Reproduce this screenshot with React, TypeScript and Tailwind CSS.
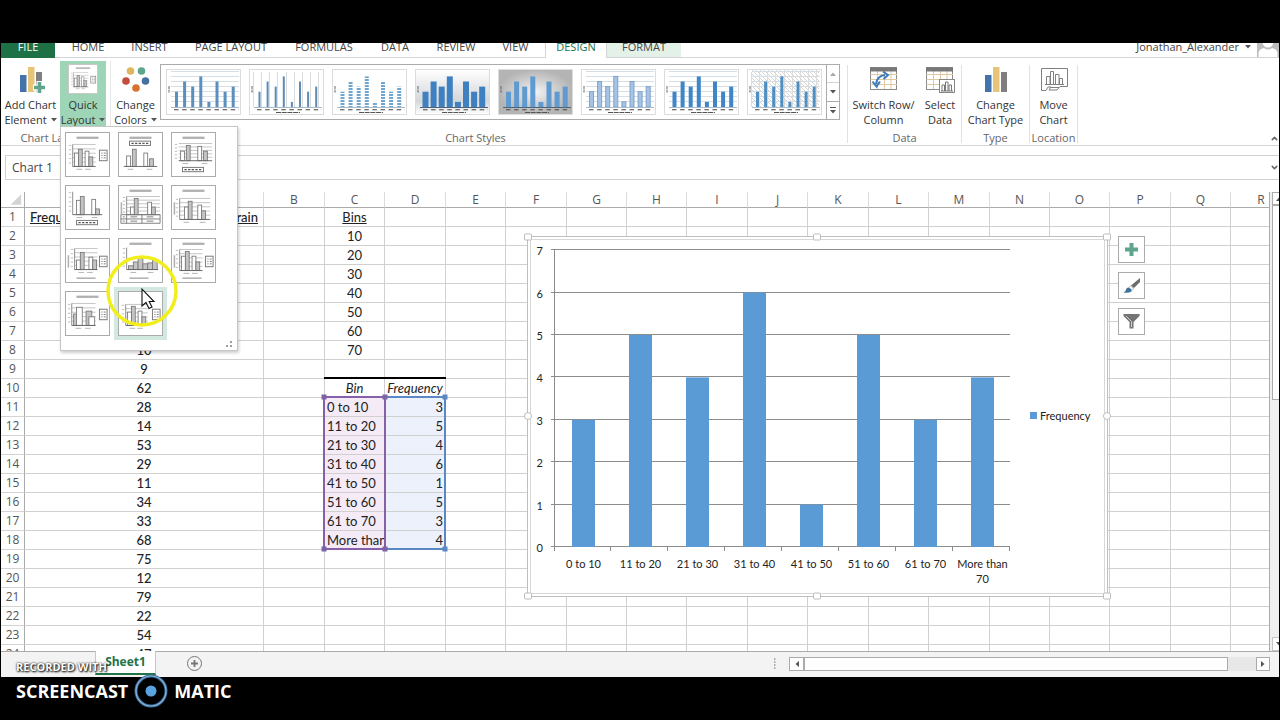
import React from 'react';
import { ChevronDown, ChevronUp } from 'lucide-react';

type Bar = [x: number, y: number, filled: boolean];

interface LayoutSpec {
  name: string;
  title?: boolean;
  plot: [left: number, top: number, right: number, bottom: number];
  grid?: boolean;
  axis?: boolean;
  legend?: 'right' | 'top' | 'bottom' | 'table';
  xTitle?: boolean;
  yTitle?: boolean;
  barWidth?: number;
  bars: Bar[];
}

const UI_FONT = "font-['Open_Sans','Noto_Sans',sans-serif]";
const CELL_FONT = "font-['Lato','Noto_Sans',sans-serif]";

const FREQUENCIES = [3, 5, 4, 6, 1, 5, 3, 4];
const BINS = ['0 to 10', '11 to 20', '21 to 30', '31 to 40', '41 to 50', '51 to 60', '61 to 70', 'More than 70'];

const COLUMNS = [
  { name: 'A', width: 239 },
  { name: 'B', width: 61 },
  { name: 'C', width: 60 },
  { name: 'D', width: 61 },
  { name: 'E', width: 60 },
  { name: 'F', width: 61 },
  { name: 'G', width: 60 },
  { name: 'H', width: 60 },
  { name: 'I', width: 61 },
  { name: 'J', width: 60 },
  { name: 'K', width: 61 },
  { name: 'L', width: 60 },
  { name: 'M', width: 61 },
  { name: 'N', width: 60 },
  { name: 'O', width: 60 },
  { name: 'P', width: 61 },
  { name: 'Q', width: 60 },
  { name: 'R', width: 61 },
];
const TABLE_WIDTH = COLUMNS.reduce((sum, c) => sum + c.width, 24);

// column A, starting at row 8
const SAMPLES = [10, 9, 62, 28, 14, 53, 29, 11, 34, 33, 68, 75, 12, 79, 22, 54, 47];

const LAYOUTS: LayoutSpec[] = [
  { name: 'Layout 1', title: true, plot: [7, 12, 31, 35], grid: true, axis: true, legend: 'right', bars: [[9, 21, false], [13, 17, true], [20, 19, false], [24, 25, true]] },
  { name: 'Layout 2', title: true, plot: [5, 16, 40, 35], legend: 'top', bars: [[8, 24, false], [14, 17, true], [26, 21, false], [32, 27, true]] },
  { name: 'Layout 3', title: true, plot: [7, 11, 42, 29], grid: true, legend: 'bottom', bars: [[9, 19, false], [15, 13, true], [27, 14, false], [33, 19, true]] },
  { name: 'Layout 4', plot: [7, 6, 38, 30], axis: true, legend: 'bottom', bars: [[11, 15, false], [15, 11, true], [27, 14, false], [31, 24, true]] },
  { name: 'Layout 5', title: true, plot: [8, 11, 43, 30], grid: true, axis: true, yTitle: true, legend: 'table', bars: [[12, 22, false], [16, 13, true], [30, 17, false], [34, 22, true]] },
  { name: 'Layout 6', title: true, plot: [8, 13, 40, 35], grid: true, axis: true, yTitle: true, bars: [[13, 22, false], [17, 16, true], [27, 20, false], [31, 26, true]] },
  { name: 'Layout 7', plot: [9, 10, 33, 32], grid: true, axis: true, yTitle: true, xTitle: true, legend: 'right', bars: [[11, 22, false], [15, 14, true], [24, 19, false], [28, 22, true]] },
  { name: 'Layout 8', title: true, plot: [8, 9, 41, 32], axis: true, xTitle: true, barWidth: 5, bars: [[10, 28, true], [15, 24, true], [20, 20, true], [25, 26, true], [30, 25, true], [35, 22, true]] },
  { name: 'Layout 9', title: true, plot: [8, 11, 32, 33], grid: true, axis: true, yTitle: true, xTitle: true, legend: 'right', bars: [[10, 18, false], [14, 13, true], [21, 18, false], [25, 24, true]] },
  { name: 'Layout 10', title: true, plot: [6, 12, 31, 35], grid: true, axis: true, legend: 'right', barWidth: 6, bars: [[8, 23, true], [11, 16, false], [21, 20, true], [24, 26, false]] },
  { name: 'Layout 11', plot: [7, 13, 30, 35], grid: true, axis: true, legend: 'right', bars: [[9, 21, false], [13, 15, true], [20, 20, false], [24, 26, true]] },
];

const LayoutThumb = ({ spec, className }: { spec: LayoutSpec; className: string }) => {
  const [left, top, right, bottom] = spec.plot;
  const step = (bottom - top) / 5;
  return (
    <svg viewBox="0 0 45 45" className={className} fill="none" stroke="#8a8a8a" strokeWidth="1">
      {spec.title && <path d="M11 5H34" stroke="#b0b0b0" strokeWidth="2.4" />}
      {spec.grid && [0, 1, 2, 3, 4].map((i) => (
        <path key={i} d={`M${left} ${top + step * i}H${right}`} stroke="#b4b4b4" strokeWidth="0.8" />
      ))}
      {spec.axis && <path d={`M${left} ${top}V${bottom}`} />}
      {[0, 1, 2, 3, 4].map((i) => (
        (spec.axis || spec.grid) && <path key={i} d={`M${left - 4} ${top + 1 + step * i}h2.4`} stroke="#aaa" strokeWidth="0.8" />
      ))}
      {spec.bars.map(([x, y, filled]) => (
        <rect key={x} x={x} y={y} width={spec.barWidth || 4} height={bottom - y} fill={filled ? '#c4c4c4' : '#fff'} stroke="#777" strokeWidth="0.9" />
      ))}
      <path d={`M${left} ${bottom}H${right}`} stroke="#666" />
      {spec.legend !== 'table' && <path d={`M${left + 4} ${bottom + 3}h6M${right - 11} ${bottom + 3}h6`} stroke="#aaa" strokeWidth="0.9" />}
      {spec.legend === 'right' && (
        <>
          <rect x="35" y="18" width="8" height="11" fill="#fff" stroke="#777" />
          <path d="M37 21h1.2M37 23.5h1.2M37 26h1.2M39.5 21h2M39.5 23.5h2M39.5 26h2" stroke="#777" />
        </>
      )}
      {(spec.legend === 'top' || spec.legend === 'bottom') && (
        <g transform={spec.legend === 'top' ? 'translate(0 8.5)' : 'translate(0 36)'}>
          <rect x="11" y="0" width="22" height="4.5" fill="#fff" stroke="#777" />
          <path d="M13 2.3h18" stroke="#555" strokeWidth="1.2" strokeDasharray="2.4 1.4" />
        </g>
      )}
      {spec.legend === 'table' && (
        <path d="M2 30H43V39H2ZM2 34.5H43M8 30V39M24 30V39M12 32.3h7M29 32.3h7M12 36.8h7M29 36.8h7M4 32.3h2M4 36.8h2" stroke="#7d7d7d" />
      )}
      {spec.xTitle && <path d="M11 41H31" stroke="#b0b0b0" strokeWidth="1.6" />}
      {spec.yTitle && <path d="M2.5 17V30" stroke="#b0b0b0" strokeWidth="1.6" />}
    </svg>
  );
};

interface StyleSpec {
  name: string;
  barWidth: number;
  fill: string;
  grid?: 'rows' | 'columns' | 'hatch';
  background?: string;
  axisTitle?: boolean;
  dashed?: boolean;
  outline?: string;
}

const STYLES: StyleSpec[] = [
  { name: 'Style 1', barWidth: 3, fill: '#5b8fc0', grid: 'rows' },
  { name: 'Style 2', barWidth: 2, fill: '#5d8bb4', grid: 'columns', axisTitle: true },
  { name: 'Style 3', barWidth: 4, fill: '#6fa6d0', axisTitle: true, dashed: true },
  { name: 'Style 4', barWidth: 6, fill: '#3f80c0', background: 'url(#fadeLight)', axisTitle: true },
  { name: 'Style 5', barWidth: 5, fill: '#5f9ad0', background: 'url(#fadeDark)', axisTitle: true },
  { name: 'Style 6', barWidth: 4, fill: '#a5c3e4', grid: 'rows', axisTitle: true, outline: '#7fa3cb' },
  { name: 'Style 7', barWidth: 4, fill: '#3f86c6', grid: 'rows', axisTitle: true },
  { name: 'Style 8', barWidth: 3, fill: '#4f8fc4', grid: 'hatch', axisTitle: true },
];

const StyleThumb = ({ spec }: { spec: StyleSpec }) => (
  <svg viewBox="0 0 75 46" className="h-[46px] w-[75px]">
    <defs>
      <linearGradient id="fadeLight" x1="0" y1="0" x2="0" y2="1">
        <stop offset="0" stopColor="#ffffff" />
        <stop offset="0.7" stopColor="#d4d6d9" />
        <stop offset="1" stopColor="#ffffff" />
      </linearGradient>
      <radialGradient id="fadeDark">
        <stop offset="0" stopColor="#f2f2f2" />
        <stop offset="1" stopColor="#b4b4b4" />
      </radialGradient>
      <pattern id="hatch" width="4" height="4" patternUnits="userSpaceOnUse">
        <path d="M0 0L4 4" stroke="#b9b9b9" strokeWidth="0.6" />
      </pattern>
    </defs>
    <rect x="0.5" y="0.5" width="74" height="45" fill={spec.background || '#fff'} stroke="#dcdcdc" />
    {spec.grid === 'hatch' && <rect x="5" y="1" width="67" height="37" fill="url(#hatch)" />}
    {(spec.grid === 'rows' || spec.grid === 'hatch') && [2, 7, 12, 17, 22, 27, 32].map((y) => (
      <path key={y} d={`M5 ${y + 0.5}H73`} stroke="#d6dee5" />
    ))}
    {(spec.grid === 'columns' || spec.grid === 'hatch') && [4, 12, 20, 28, 37, 45, 53, 61, 69].map((x) => (
      <path key={x} d={`M${x + 0.5} 3V38`} stroke="#dcdcdc" />
    ))}
    {FREQUENCIES.map((value, i) => (
      <rect
        key={i}
        x={10.5 + i * 8.1 - spec.barWidth / 2}
        y={38 - value * 5.1}
        width={spec.barWidth}
        height={value * 5.1}
        fill={spec.fill}
        stroke={spec.outline}
      />
    ))}
    {spec.dashed && [9, 12, 15, 18, 21, 24, 27, 30, 33, 36].map((y) => (
      <path key={y} d={`M7 ${y + 0.5}H72`} stroke="#fff" />
    ))}
    <path d="M5 38.5H73" stroke={spec.background ? '#4d6378' : '#a9bacb'} />
    <path d="M8 40.7H73" stroke="#444" strokeWidth="1.1" strokeDasharray="4.5 3.6" />
    {spec.axisTitle && <path d="M27 43.5H51" stroke="#555" strokeWidth="1" strokeDasharray="5 0.7" />}
    {(spec.axisTitle || spec.name === 'Style 1') && <path d="M3 17V24" stroke="#666" strokeWidth="1" strokeDasharray="3 0.6" />}
  </svg>
);

const Caret = () => (
  <svg viewBox="0 0 6 4" className="h-1 w-1.5 shrink-0">
    <path d="M0 0H6L3 3.5Z" fill="#555" />
  </svg>
);

const RibbonButton = ({ lines, caret, active, width, children }: {
  lines: [string, string];
  caret?: boolean;
  active?: boolean;
  width: string;
  children: React.ReactNode;
}) => (
  <button className={`flex h-[68px] ${width} flex-col items-center whitespace-nowrap text-[11px] leading-[15px] text-[#333] ${active ? 'bg-[#9fd5b7]' : ''}`}>
    <span className="flex h-[36px] items-center">{children}</span>
    <span>{lines[0]}</span>
    <span className="flex items-center gap-1">
      {lines[1]}
      {caret && <Caret />}
    </span>
  </button>
);

const RibbonGroup = ({ label, children }: { label: string; children: React.ReactNode }) => (
  <section aria-label={label} className="flex flex-col items-center">
    <div className="flex h-[68px]">{children}</div>
    <span className="text-[11px] leading-[18px] text-[#666]">{label}</span>
  </section>
);

const Divider = () => <div className="mt-1 h-[78px] w-px shrink-0 bg-[#e1e1e1]" />;

const TABS = [
  { name: 'HOME', width: 'w-[66px]' },
  { name: 'INSERT', width: 'w-[57px]' },
  { name: 'PAGE LAYOUT', width: 'w-[106px]' },
  { name: 'FORMULAS', width: 'w-[80px]' },
  { name: 'DATA', width: 'w-[62px]' },
  { name: 'REVIEW', width: 'w-[60px]' },
  { name: 'VIEW', width: 'w-[59px]' },
];

const TabBar = () => (
  <nav className="-mt-[7px] flex h-[22px] shrink-0 items-stretch text-[11px] leading-[22px] text-[#444]">
    <button className="w-[54px] bg-[#1e7145] text-white">FILE</button>
    {TABS.map((tab) => (
      <button key={tab.name} className={`${tab.width} whitespace-nowrap border-b border-[#d4d4d4]`}>{tab.name}</button>
    ))}
    <button className="w-[62px] border-x border-[#d4d4d4] text-[#217346]">DESIGN</button>
    <button className="w-[74px] border-b border-[#d4d4d4] bg-[#e4f1e8]">FORMAT</button>
    <div className="flex flex-1 items-center justify-end gap-1.5 border-b border-[#d4d4d4]">
      <button className="flex items-center gap-1.5">Jonathan_Alexander <Caret /></button>
      <svg viewBox="0 0 22 21" className="h-[21px] w-[22px] bg-[#bdbdbd]">
        <circle cx="11" cy="6" r="5.5" fill="#fff" />
        <path d="M1.500 21V17Q2 13 7 12Q11 15 15 12Q20 13 20.500 17V21Z" fill="#fff" />
      </svg>
    </div>
  </nav>
);

const BarsIcon = ({ plus }: { plus?: boolean }) => (
  <svg viewBox="0 0 28 28" className="h-7 w-7">
    <rect x="3" y="10" width="6.500" height="17" fill="#4472ab" />
    <rect x="11" y="2" width="6.500" height="25" fill="#e6c57a" />
    <rect x="19" y="7" width="6" height="20" fill="#7f7f7f" />
    {plus && (
      <>
        <path d="M22.500 16V29M16 22.500H29" stroke="#fff" strokeWidth="6" />
        <path d="M22.500 17V28M17 22.500H28" stroke="#5fa58c" strokeWidth="3.600" />
      </>
    )}
  </svg>
);

const SheetIcon = ({ kind }: { kind: 'switch' | 'select' }) => (
  <svg viewBox="0 0 30 28" className="h-7 w-[30px]" fill="none">
    <rect x="1.500" y="2.500" width="26" height="22" fill="#fff" stroke="#8a8a8a" />
    <path d="M1.500 9.500H28M1.500 14.500H28M1.500 19.500H28M8.500 6V24M15.500 6V24M22 6V24" stroke="#e0c9a2" />
    <path d="M1 4.500H28" stroke="#777" strokeWidth="4" />
    {kind === 'switch' ? (
      <>
        <path d="M7 19Q8 11 16 10" stroke="#3f7ab8" strokeWidth="2" />
        <path d="M14 6.500L19 10L14.500 14M3.500 16.500L7.500 21.500L11 16.500" stroke="#3f7ab8" strokeWidth="2" />
      </>
    ) : (
      <>
        <rect x="14.500" y="14.500" width="15" height="13" fill="#fff" stroke="#888" />
        <path d="M17 26V20h2.500v6M20.500 26V17H23v9M24 26V20h2.500v6M16 26H28" stroke="#777" />
      </>
    )}
  </svg>
);

const MoveChartIcon = () => (
  <svg viewBox="0 0 28 28" className="h-7 w-7" fill="none" stroke="#808080">
    <path d="M1.500 3.500H27.500V21.500H20L17 25H9L11 22H8L6 25.500H1.500Z" fill="#fff" />
    <path d="M6.500 19.500V11.500h3.500v8M10.500 19.500V6.500H13.500v13M15.500 19.500V9.500h3.500v10M19.500 19.500V13.500h3v6M5 19.500H24" />
    <path d="M10 22.500H19" />
  </svg>
);

const ColorsIcon = () => (
  <svg viewBox="0 0 28 28" className="h-7 w-7">
    <circle cx="8.500" cy="6" r="3.800" fill="#e0b55f" />
    <circle cx="19.500" cy="6" r="3.800" fill="#5fa58c" />
    <circle cx="4" cy="16" r="3.800" fill="#c14e3c" />
    <circle cx="23.500" cy="16" r="3.800" fill="#44719f" />
    <circle cx="14" cy="23" r="3.800" fill="#d9722e" />
  </svg>
);

const Gallery = () => (
  <div className="mt-[3px] flex h-[56px] border border-[#ababab]">
    <div className="flex items-center gap-2 pr-1 pl-[5px]">
      {STYLES.map((style) => (
        <button key={style.name} aria-label={style.name}>
          <StyleThumb spec={style} />
        </button>
      ))}
    </div>
    <div className="flex w-[13px] flex-col divide-y divide-[#ababab] border-l border-[#ababab]">
      <button aria-label="Previous styles" className="flex flex-1 items-center justify-center opacity-50"><span className="flex rotate-180"><Caret /></span></button>
      <button aria-label="Next styles" className="flex flex-1 items-center justify-center"><Caret /></button>
      <button aria-label="More styles" className="flex flex-1 flex-col items-center justify-center gap-0.5">
        <span className="h-px w-1.5 bg-[#555]" />
        <Caret />
      </button>
    </div>
  </div>
);

const LayoutMenu = () => (
  <div className="absolute top-[68px] left-[59px] z-20 w-[178px] border border-[#c6c6c6] bg-white pt-[5px] pb-[14px] pl-1 shadow-[1px_2px_3px_rgba(0,0,0,0.2)]">
    <div className="grid grid-cols-[45px_45px_45px] gap-2">
      {LAYOUTS.map((spec, i) => (
        <button
          key={spec.name}
          aria-label={spec.name}
          className={`h-[45px] w-[45px] border border-[#ababab] bg-white ${i === 10 ? 'ring-4 ring-[#d3e9df]' : ''}`}
        >
          <LayoutThumb spec={spec} className="h-[43px] w-[43px]" />
        </button>
      ))}
    </div>
    <svg viewBox="0 0 8 8" className="absolute right-1 bottom-0.5 h-2 w-2">
      <path d="M5 1h2v2H5zM5 5h2v2H5zM1 5h2v2H1z" fill="#a0a0a0" />
    </svg>
    {/* pointer with its highlight ring */}
    <svg viewBox="0 0 76 76" className="pointer-events-none absolute top-[126px] left-[43px] h-[76px] w-[76px]">
      <circle cx="38" cy="38" r="34" fill="none" stroke="#f2ee1c" strokeWidth="3.500" />
      <path d="M38 36V53L42 49.500L45 55.500L48 54L45.200 48.500H50Z" fill="#fff" stroke="#111" strokeWidth="1.100" />
    </svg>
  </div>
);

const Ribbon = () => (
  <header className="relative flex h-[88px] shrink-0 border-b border-[#d4d4d4] pt-[3px]">
    <RibbonGroup label="Chart Layouts">
      <RibbonButton lines={['Add Chart', 'Element']} caret width="w-[59px]"><BarsIcon plus /></RibbonButton>
      <RibbonButton lines={['Quick', 'Layout']} caret active width="w-[46px]">
        <LayoutThumb spec={LAYOUTS[0]} className="h-[30px] w-[30px] border border-[#c8c8c8] bg-white" />
      </RibbonButton>
      <div className="ml-1 h-[68px] w-px bg-[#e8e8e8]" />
    </RibbonGroup>
    <RibbonGroup label="Chart Styles">
      <RibbonButton lines={['Change', 'Colors']} caret width="w-[49px]"><ColorsIcon /></RibbonButton>
      <Gallery />
    </RibbonGroup>
    <div className="w-[7px]" />
    <Divider />
    <RibbonGroup label="Data">
      <RibbonButton lines={['Switch Row/', 'Column']} width="w-[71px]"><SheetIcon kind="switch" /></RibbonButton>
      <RibbonButton lines={['Select', 'Data']} width="w-[42px]"><SheetIcon kind="select" /></RibbonButton>
    </RibbonGroup>
    <Divider />
    <RibbonGroup label="Type">
      <RibbonButton lines={['Change', 'Chart Type']} width="w-[67px]"><BarsIcon /></RibbonButton>
    </RibbonGroup>
    <Divider />
    <RibbonGroup label="Location">
      <RibbonButton lines={['Move', 'Chart']} width="w-[47px]"><MoveChartIcon /></RibbonButton>
    </RibbonGroup>
    <Divider />
    <button aria-label="Collapse the ribbon" className="mt-auto mb-0.5 ml-auto"><ChevronUp size={9} strokeWidth={4} color="#666" /></button>
    <LayoutMenu />
  </header>
);

const FormulaBar = () => (
  <div className="mt-[9px] mb-3 ml-1 flex h-[25px] shrink-0 border border-r-0 border-[#cfcfcf]">
    <input aria-label="Name box" defaultValue="Chart 1" className="w-[180px] px-1.5 text-xs text-[#444] outline-none" />
    <input aria-label="Formula bar" className="min-w-0 flex-1 px-1.5 text-xs outline-none" />
    <button aria-label="Expand the formula bar"><ChevronDown size={9} strokeWidth={4} color="#666" /></button>
  </div>
);

const cellText = (column: string, row: number): React.ReactNode => {
  if (column === 'A' && row >= 8) return SAMPLES[row - 8];
  if (column === 'A' && row === 1) {
    return <span className="flex justify-between px-[5px] underline"><span>Frequency</span><span>rain</span></span>;
  }
  if (column === 'C') {
    if (row === 1) return <span className="underline">Bins</span>;
    if (row <= 8) return (row - 1) * 10;
    if (row === 10) return 'Bin';
    if (row >= 11 && row <= 18) return BINS[row - 11];
  }
  if (column === 'D') {
    if (row === 10) return 'Frequency';
    if (row >= 11 && row <= 18) return FREQUENCIES[row - 11];
  }
  return null;
};

const cellClass = (column: string, row: number) => {
  const inBins = row >= 11 && row <= 18;
  if (column === 'C' && inBins) return 'bg-[#f4ebf6] pl-[2px] text-left';
  if (column === 'D' && inBins) return 'bg-[#edf1fc] pr-[2px] text-right';
  if (row === 10) return `text-center ${column === 'A' ? 'font-medium' : 'italic'}`;
  if (column === 'A') return 'text-center font-medium';
  return 'text-center';
};

const Grid = () => (
  <table className={`table-fixed border-separate border-spacing-0 ${CELL_FONT}`} style={{ width: TABLE_WIDTH }}>
    <colgroup>
      <col className="w-6" />
      {COLUMNS.map((c) => <col key={c.name} style={{ width: c.width }} />)}
    </colgroup>
    <thead>
      <tr className={`h-4 text-xs leading-[15px] text-[#555] ${UI_FONT}`}>
        <th className="border-r border-b border-[#ababab] p-0">
          <svg viewBox="0 0 24 15" className="h-[15px] w-[23px]"><path d="M21 2V13H10Z" fill="#d4d4d4" /></svg>
        </th>
        {COLUMNS.map((c) => (
          <th key={c.name} className="h-4 border-r border-b border-r-[#dcdcdc] border-b-[#ababab] p-0 font-normal">{c.name}</th>
        ))}
      </tr>
    </thead>
    <tbody>
      {Array.from({ length: 24 }, (_, i) => i + 1).map((row) => (
        <tr key={row} className="h-[19px]">
          <th className={`h-[19px] border-r border-b border-r-[#ababab] border-b-[#d4d4d4] p-0 text-xs leading-[18px] font-normal text-[#555] ${UI_FONT}`}>{row}</th>
          {COLUMNS.map((c) => (
            <td
              key={c.name}
              className={`h-[19px] overflow-hidden border-r border-b border-[#d0d0d0] p-0 text-[13px] leading-[18px] whitespace-nowrap text-[#222] ${cellClass(c.name, row)}`}
            >
              {cellText(c.name, row)}
            </td>
          ))}
        </tr>
      ))}
    </tbody>
  </table>
);

const RangeOutlines = () => (
  <svg viewBox="320 374 130 180" className="pointer-events-none absolute top-[182px] left-[319px] h-[180px] w-[130px]" fill="none">
    <path d="M324 378H446" stroke="#000" strokeWidth="2" />
    <path d="M385 397H445V549H385" stroke="#5b87c5" strokeWidth="2" />
    <path d="M324 397H385V549H324Z" stroke="#8660a9" strokeWidth="2" />
    {[397, 549].map((y) => (
      <React.Fragment key={y}>
        <rect x="321.500" y={y - 2.5} width="5" height="5" fill="#7d62a4" />
        <rect x="382.500" y={y - 2.5} width="5" height="5" fill="#7d62a4" />
        <rect x="442.500" y={y - 2.5} width="5" height="5" fill="#5b87c5" />
      </React.Fragment>
    ))}
  </svg>
);

const PLOT = { left: 554, right: 1010, base: 547, unit: 42.4 };
const SLOT = (PLOT.right - PLOT.left) / 8;

const FrequencyChart = () => (
  <svg
    viewBox="522 232 590 370"
    role="img"
    aria-label="Frequency by bin"
    className={`absolute top-10 left-[521px] h-[370px] w-[590px] text-[11px] ${CELL_FONT}`}
    fill="none"
  >
    <rect x="527.500" y="236.500" width="580" height="360" fill="#fff" stroke="#bfbfbf" />
    <rect x="530.500" y="239.500" width="574" height="354" stroke="#d8d8d8" />
    {[0, 1, 2, 3, 4, 5, 6, 7].map((v) => {
      const y = Math.round(PLOT.base - v * PLOT.unit) - 0.5;
      return (
        <g key={v}>
          <path d={`M${PLOT.left - 3} ${y}H${PLOT.right}`} stroke="#8c8c8c" />
          <text x="543" y={y + 5} textAnchor="end" fill="#222">{v}</text>
        </g>
      );
    })}
    <path d={`M${PLOT.left + 0.5} 250V551`} stroke="#8c8c8c" />
    {FREQUENCIES.map((value, i) => {
      const center = PLOT.left + SLOT * (i + 0.5);
      const words = BINS[i] === 'More than 70' ? ['More than', '70'] : [BINS[i]];
      return (
        <g key={i}>
          <rect x={Math.round(center - 11)} y={PLOT.base - value * PLOT.unit} width="23" height={value * PLOT.unit} fill="#5b9bd5" />
          <path d={`M${Math.round(PLOT.left + SLOT * (i + 1)) - 0.5} 547V551`} stroke="#8c8c8c" />
          {words.map((word, line) => (
            <text key={word} x={center + 1} y={568 + line * 15} textAnchor="middle" fill="#222">{word}</text>
          ))}
        </g>
      );
    })}
    <rect x="1030" y="412" width="7" height="7" fill="#5b9bd5" />
    <text x="1040" y="420" fill="#222">Frequency</text>
    {[[528, 237], [1107, 237], [528, 596], [1107, 596], [817, 237], [817, 596]].map(([x, y]) => (
      <rect key={`${x}-${y}`} x={x - 3.5} y={y - 3} width="7" height="6" rx="1" fill="#fff" stroke="#bdbdbd" />
    ))}
    {[528, 1107].map((x) => <circle key={x} cx={x} cy="416" r="3.500" fill="#fff" stroke="#bdbdbd" />)}
  </svg>
);

const ChartTools = () => (
  <div className="absolute top-11 left-[1117px] flex flex-col gap-[9px]">
    <button aria-label="Chart elements" className="h-[27px] w-[27px] border border-[#ababab] bg-white">
      <svg viewBox="0 0 25 25" className="h-[25px] w-[25px]"><path d="M12.500 6V19M6 12.500H19" stroke="#5fa58c" strokeWidth="4" /></svg>
    </button>
    <button aria-label="Chart styles" className="h-[27px] w-[27px] border border-[#ababab] bg-white">
      <svg viewBox="0 0 25 25" className="h-[25px] w-[25px]">
        <path d="M21 5V9L15 15L12 12.500Z" fill="#6b6b6b" />
        <path d="M11.500 13L14.500 15.500L13 17.500L9.500 14.500Z" fill="#fff" stroke="#999" strokeWidth="0.700" />
        <path d="M9 14.500Q13 15.500 12.500 18.500Q9 20.500 4.500 19.500Q7 18.500 7 16.500Q7.500 15 9 14.500Z" fill="#3e7299" />
      </svg>
    </button>
    <button aria-label="Chart filters" className="h-[27px] w-[27px] border border-[#ababab] bg-white">
      <svg viewBox="0 0 25 25" className="h-[25px] w-[25px]">
        <path d="M4.500 5H20.500V7L14.500 13V19.500H10.500V13L4.500 7Z" fill="#757575" />
        <path d="M7 7L12.500 12.500V18" stroke="#cfcfcf" fill="none" />
      </svg>
    </button>
  </div>
);

const VerticalScroll = () => (
  <div className="flex w-[7px] shrink-0 flex-col overflow-hidden bg-[#f0f0f0]">
    <button aria-label="Scroll up" className="flex h-[13px] w-[14px] items-center justify-center border border-[#ababab] bg-white"><span className="flex rotate-180"><Caret /></span></button>
    <div className="h-[195px] w-[14px] border border-[#ababab] bg-white" />
    <button aria-label="Scroll down" className="mt-auto flex h-[14px] w-[14px] items-center justify-center border border-[#c6c6c6] bg-white"><Caret /></button>
  </div>
);

const SheetBar = () => (
  <footer className="flex h-[26px] shrink-0 items-start border-t border-[#ababab] bg-[#f3f3f3]">
    <button className="-mt-px ml-[94px] h-6 w-[61px] border-x border-b-2 border-x-[#c6c6c6] border-b-[#217346] bg-white text-xs font-bold text-[#217346]">Sheet1</button>
    <button aria-label="New sheet" className="mt-[3px] ml-[30px]">
      <svg viewBox="0 0 17 17" className="h-[17px] w-[17px]" fill="none" stroke="#777">
        <circle cx="8.500" cy="8.500" r="7" />
        <path d="M8.500 5V12M5 8.500H12" strokeWidth="1.800" />
      </svg>
    </button>
    <div className="mt-[5px] mr-[9px] ml-auto flex h-[14px] w-[497px] items-stretch">
      <svg viewBox="0 0 16 14" className="h-[14px] w-4"><path d="M1 2h1.500M1 5h1.500M1 8h1.500M1 11h1.500" stroke="#999" strokeWidth="1.500" /></svg>
      <button aria-label="Scroll left" className="flex w-[15px] items-center justify-center border border-[#ababab] bg-white"><span className="flex rotate-90"><Caret /></span></button>
      <div className="w-[424px] border border-[#ababab] bg-white" />
      <div className="flex-1 bg-[#e8e8e8]" />
      <button aria-label="Scroll right" className="flex w-[14px] items-center justify-center border border-[#ababab] bg-white"><span className="flex -rotate-90"><Caret /></span></button>
    </div>
  </footer>
);

const Watermark = () => (
  <div className="absolute bottom-3 left-4 z-30 font-['Open_Sans',sans-serif] font-bold text-white">
    <div className="text-[11px] leading-[14px] [text-shadow:1px_1px_2px_#000,0_0_2px_#000]">RECORDED WITH</div>
    <div className="flex items-center gap-1.5 text-lg leading-8">
      <span>SCREENCAST</span>
      <svg viewBox="0 0 34 34" className="h-[34px] w-[34px]">
        <circle cx="17" cy="17" r="15" fill="#000" stroke="#3c6e9b" strokeWidth="3" />
        <circle cx="17" cy="17" r="15" fill="none" stroke="#86b5de" strokeWidth="1.200" />
        <circle cx="17" cy="17" r="5.500" fill="#5ba3e0" />
      </svg>
      <span>MATIC</span>
    </div>
  </div>
);

const App = () => {
  return (
    <div className={`relative flex h-screen flex-col overflow-hidden bg-black ${UI_FONT}`}>
      <div className="relative z-10 h-[43px] shrink-0 bg-black" />
      <div className="mx-px flex min-h-0 flex-1 flex-col bg-white">
        <TabBar />
        <Ribbon />
        <FormulaBar />
        <main className="flex min-h-0 flex-1">
          <div className="relative min-w-0 flex-1 overflow-hidden border-r border-[#ababab]">
            <Grid />
            <RangeOutlines />
            <FrequencyChart />
            <ChartTools />
          </div>
          <div className="w-[2px] bg-[#f0f0f0]" />
          <VerticalScroll />
        </main>
        <SheetBar />
      </div>
      <div className="h-[43px] shrink-0 bg-black" />
      <Watermark />
    </div>
  );
};

export default App;
